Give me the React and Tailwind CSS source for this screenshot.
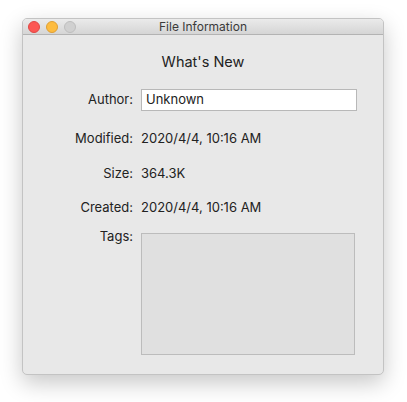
export default function App() {
  const font = { fontFamily: 'Inter, "Liberation Sans", sans-serif' };
  const rows = [
    ["Modified:", "2020/4/4, 10:16 AM", "mt-[19px]"],
    ["Size:", "364.3K", "mt-[19px]"],
    ["Created:", "2020/4/4, 10:16 AM", "mt-[18px]"],
  ];
  return (
    <div className="w-[407px] h-[402px] bg-white pt-[18px] pl-[22px] text-[#222222]" style={font}>
      <div className="w-[362px] h-[357px] rounded-[5px] border border-[#c3c3c3] bg-[#e8e8e8] shadow-[0_8px_22px_rgba(0,0,0,0.22)] flex flex-col overflow-hidden">
        <div className="relative h-[16px] shrink-0 border-b border-[#b3b3b3] bg-gradient-to-b from-[#ebebeb] to-[#d5d5d5] flex items-center pl-[5px] gap-[6px]">
          <div className="w-[12px] h-[12px] rounded-full bg-[#fc5753] border border-[#df4744]" />
          <div className="w-[12px] h-[12px] rounded-full bg-[#fdbc40] border border-[#de9f34]" />
          <div className="w-[12px] h-[12px] rounded-full bg-[#d0d0d0] border border-[#bdbdbd]" />
          <div className="absolute inset-0 flex items-center justify-center pt-[1px] text-[12px] leading-none text-[#3a3a3a]">
            File Information
          </div>
        </div>
        <div className="mt-[18px] text-center text-[14.5px] leading-[18px]">What's New</div>
        <div className="mt-[18px] flex items-center h-[22px]">
          <div className="w-[110px] text-right text-[13px]">Author:</div>
          <div className="ml-[8px] w-[216px] h-[22px] bg-white border border-[#b8b8b8] flex items-center pl-[4px] text-[13px]">
            Unknown
          </div>
        </div>
        {rows.map(([l, v, m]) => (
          <div key={l} className={`${m} flex items-center h-[16px] text-[13px] leading-[16px]`}>
            <div className="w-[110px] text-right">{l}</div>
            <div className="ml-[8px]">{v}</div>
          </div>
        ))}
        <div className="mt-[18px] flex items-start">
          <div className="w-[110px] text-right text-[13px] leading-[16px] -mt-[5px]">Tags:</div>
          <div className="ml-[8px] w-[214px] h-[122px] bg-[#e0e0e0] border border-[#bcbcbc]" />
        </div>
      </div>
    </div>
  );
}
